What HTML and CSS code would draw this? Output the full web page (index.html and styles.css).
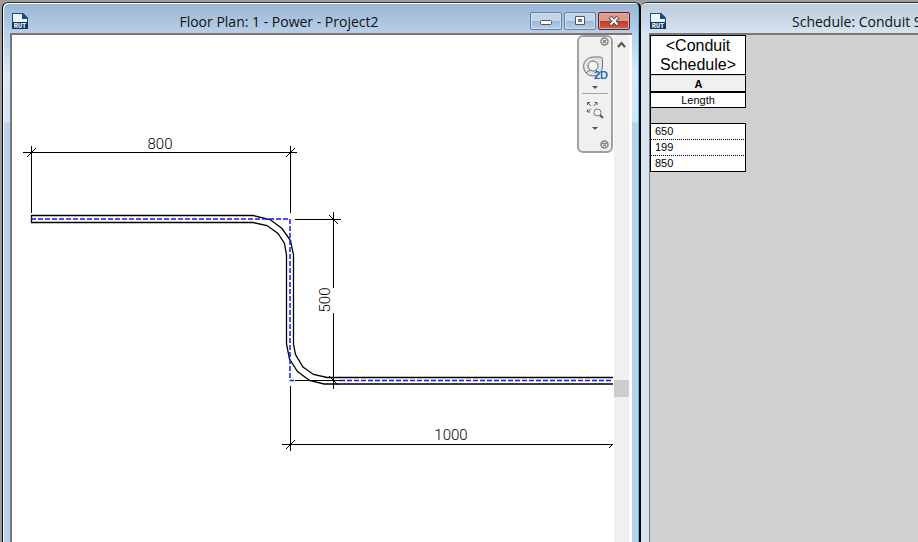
FILE: index.html
```
<!DOCTYPE html>
<html lang="en">
<head>
    <meta charset="utf-8">
    <meta name="viewport" content="width=device-width, initial-scale=1.0">
    <title>Project2</title>
    <link rel="stylesheet" href="styles.css">
</head>
<body>

<main class="workspace">
    <section class="window active">
        <header class="titlebar">
            <svg class="app-icon" width="16" height="16" aria-hidden="true">
                <path d="M0 0h11l5 5v11H0z" fill="#1b4f8c"/>
                <path d="M1 1h9v5h5v3H1z" fill="#f1f6fb"/>
                <path d="M11 0l5 5h-5z" fill="#0c4a8e"/>
                <path d="M0 9h16v7H0z" fill="#0b3468"/>
                <text x="8" y="15" class="rvt-text">RUT</text>
            </svg>
            <h1 class="title">Floor Plan: 1 - Power - Project2</h1>
            <div class="controls">
                <button type="button" class="control" aria-label="Minimize">
                    <svg width="12" height="10"><rect x="0.500" y="4.500" width="11" height="4" rx="1" fill="#fff" stroke="#535666"/></svg>
                </button>
                <button type="button" class="control" aria-label="Maximize">
                    <svg width="12" height="10"><path d="M1.500 0.500h9v8h-9z" fill="#fff" stroke="#535666"/><path d="M4.500 3.500h3v2h-3z" fill="#8fb0d0" stroke="#535666"/></svg>
                </button>
                <button type="button" class="control close" aria-label="Close">
                    <svg width="12" height="10"><path d="M2 1l8 8M10 1L2 9" stroke="#5a4550" stroke-width="4"/><path d="M2.500 1.500l7 7M9.500 1.500l-7 7" stroke="#fff" stroke-width="2"/></svg>
                </button>
            </div>
        </header>
        <div class="client">
            <div class="canvas">
                <svg class="drawing" width="602" height="507" viewBox="12 35 602 507">
                    <!-- conduit -->
                    <g class="conduit">
                        <path d="M253 215.500H31.500V222.500H253"/>
                        <path d="M253 215.500L270 219.500L282 228.500L290.500 240.500L293.500 255V344L295.500 354.500L303 367L313.500 374.500L327 377.500H613"/>
                        <path d="M253 222.500L267 225.500L278 233.500L284.500 243.500L286.500 255V344L289.500 359L297.500 371.500L309.500 380.500L324 384H613"/>
                    </g>
                    <path class="center" d="M31 219H290"/>
                    <path class="center" d="M290 219V380.500"/>
                    <path class="center" d="M290 380.500H294M340 380.500H613"/>

                    <!-- dimensions -->
                    <g class="dim">
                        <path d="M23 152.500H297M31.500 146V213M290.500 146V213"/>
                        <path d="M27 157l9-9M286 157l9-9"/>
                        <path d="M295 219.500H341M295 380.500H341M333.500 212V288M333.500 313V389"/>
                        <path d="M329 215l9 9M329 376l9 9"/>
                        <path d="M282 444.500H613M290.500 386V451"/>
                        <path d="M286 449l9-9M609 448l4-4"/>
                    </g>
                    <text class="dim-text" x="160" y="149">800</text>
                    <text class="dim-text" x="451" y="440">1000</text>
                    <text class="dim-text" transform="translate(330 300) rotate(-90)">500</text>
                </svg>

                <nav class="navbar" aria-label="Navigation">
                    <button type="button" class="nav-btn small" aria-label="Close navigation bar">
                        <svg width="9" height="9"><circle cx="4.500" cy="4.500" r="3.500" class="ring"/><path d="M3 3l3 3M6 3L3 6" class="ring"/></svg>
                    </button>
                    <button type="button" class="nav-btn wheel" aria-label="Steering wheel 2D">
                        <svg width="26" height="26">
                            <path d="M11 2H18Q20.500 2 20.500 4.500V12A9.500 9.500 0 1 1 11 2z" fill="#e2e2ea" stroke="#6f6f79"/>
                            <circle cx="11" cy="11" r="5" fill="#f3f3f3" stroke="#6f6f79"/>
                            <path d="M4 18l4-3M14 15l2 2" stroke="#6f6f79"/>
                            <text x="12" y="24" class="two-d">2D</text>
                        </svg>
                    </button>
                    <button type="button" class="nav-btn arrow" aria-label="Wheel options"><svg width="6" height="3"><path d="M0 0h6L3 3z"/></svg></button>
                    <hr class="nav-line">
                    <button type="button" class="nav-btn zoom" aria-label="Zoom in region">
                        <svg width="18" height="18" fill="none" stroke="#55555c">
                            <path d="M1.500 4V1.500H4M8.500 1.500H11V4M1.500 8.500V11H4M2 2l3 3M10.500 2l-3 3M2 10.500l3-3"/>
                            <circle cx="11.500" cy="11.500" r="3.500" fill="#f5f5f5" stroke="#528089"/>
                            <path d="M14 14l3 3" stroke-width="2"/>
                        </svg>
                    </button>
                    <button type="button" class="nav-btn arrow" aria-label="Zoom options"><svg width="6" height="3"><path d="M0 0h6L3 3z"/></svg></button>
                    <button type="button" class="nav-btn small last" aria-label="Customize">
                        <svg width="9" height="9"><circle cx="4.500" cy="4.500" r="3.500" class="ring"/><path d="M2 3.500h5M3 5.500h3" class="ring"/></svg>
                    </button>
                </nav>
            </div>
            <div class="scrollbar">
                <button type="button" class="scroll-up" aria-label="Scroll up">
                    <svg width="9" height="7"><path d="M1 6l3.500-4L8 6" fill="none" stroke="#505050" stroke-width="2"/></svg>
                </button>
                <div class="thumb"></div>
            </div>
        </div>
    </section>

    <section class="window schedule">
        <header class="titlebar">
            <svg class="app-icon" width="16" height="16" aria-hidden="true">
                <path d="M0 0h11l5 5v11H0z" fill="#1b4f8c"/>
                <path d="M1 1h9v5h5v3H1z" fill="#f1f6fb"/>
                <path d="M11 0l5 5h-5z" fill="#0c4a8e"/>
                <path d="M0 9h16v7H0z" fill="#0b3468"/>
                <text x="8" y="15" class="rvt-text">RUT</text>
            </svg>
            <h2 class="title">Schedule: Conduit Schedule</h2>
        </header>
        <div class="client">
            <table class="grid">
                <thead>
                    <tr class="name"><th>&lt;Conduit Schedule&gt;</th></tr>
                    <tr class="letter"><th>A</th></tr>
                    <tr class="field"><th>Length</th></tr>
                </thead>
                <tbody>
                    <tr class="spacer"><td></td></tr>
                    <tr><td>650</td></tr>
                    <tr><td>199</td></tr>
                    <tr><td>850</td></tr>
                </tbody>
            </table>
        </div>
    </section>
</main>

</body>
</html>
```

FILE: styles.css
```
* {
    box-sizing: border-box;
}

body {
    margin: 0;
    background-color: #9c9c9c;
    font-family: "Liberation Sans", Arial, sans-serif;
    overflow: hidden;
}

.workspace {
    display: grid;
    grid-template-columns: minmax(0, 1fr) 277px;
    height: 100vh;
    padding: 2px 0 0 2px;
}

/* windows */
.window {
    display: flex;
    flex-direction: column;
    min-width: 0;
    border-top: 1px solid #303030;
    border-radius: 6px 0 0 0;
    overflow: hidden;
}

.active {
    border-left: 1px solid #000;
    border-right: 2px solid #000;
    border-radius: 6px 6px 0 0;
    background: linear-gradient(#9ab5d3, #b9d1ea 32px, #dbe9f7 70px, #d3e4f5 119px, #b9d1ea 120px);
    box-shadow: inset 1px 1px #fff, inset -1px 0 #35c8ee;
    padding: 0 7px;
}

.schedule {
    background: linear-gradient(#bccbda, #d7e4f2 32px);
    box-shadow: inset 0 1px #eef4fa;
    padding-left: 8px;
}

.titlebar {
    display: flex;
    align-items: center;
    flex: none;
    height: 30px;
    padding-top: 6px;
}

.app-icon {
    flex: none;
    margin-left: 2px;
}

.schedule .app-icon {
    margin-left: 1px;
}

.rvt-text {
    font: bold 7px "Liberation Mono", monospace;
    fill: #fff;
    text-anchor: middle;
}

.title {
    flex: 1;
    margin: 0;
    padding-top: 2px;
    font: 14px/20px "Open Sans", "Segoe UI", sans-serif;
    color: #111;
    text-align: center;
    white-space: nowrap;
}

.schedule .title {
    padding-left: 126px;
    text-align: left;
}

.controls {
    display: flex;
    gap: 2px;
    margin-right: 2px;
}

.control {
    display: flex;
    align-items: center;
    justify-content: center;
    width: 32px;
    height: 18px;
    padding: 0;
    border: 1px solid #66809f;
    border-radius: 2px;
    background: linear-gradient(#c2d5e9 50%, #9db9d6 50%, #b5cee8);
    box-shadow: inset 0 0 0 1px #cfdff0;
}

.close {
    border-color: #582030;
    background: linear-gradient(#dc9a8d 50%, #bc3b27 50%, #d0614b);
    box-shadow: inset 0 0 0 1px #e3a79c;
}

.client {
    display: flex;
    flex: 1;
    min-height: 0;
    border: solid #777;
    border-width: 2px 0 0 2px;
    background-color: #fff;
}

.schedule .client {
    border-left-width: 1px;
    background-color: #d0d0d0;
}

/* plan view */
.canvas {
    position: relative;
    flex: 1;
    min-width: 0;
    overflow: hidden;
}

.drawing {
    display: block;
}

.conduit {
    fill: none;
    stroke: #000;
    stroke-width: 1.3;
}

.center {
    fill: none;
    stroke: #1414f0;
    stroke-width: 1.5;
    stroke-dasharray: 5 2;
}

.dim {
    stroke: #000;
}

.dim-text {
    font: 300 15px Roboto, "Liberation Sans", sans-serif;
    text-anchor: middle;
}

.navbar {
    position: absolute;
    top: 0;
    right: 1px;
    display: flex;
    flex-direction: column;
    align-items: center;
    width: 36px;
    height: 118px;
    border: 2px solid #a0a0a0;
    border-radius: 6px;
    background-color: #f0f0f0;
}

.nav-btn {
    display: block;
    padding: 0;
    border: 0;
    background: none;
    line-height: 0;
}

.nav-btn svg {
    display: block;
}

.small {
    align-self: flex-end;
    margin-right: 2px;
}

.ring {
    fill: none;
    stroke: #858585;
    stroke-width: 1.5;
}

.wheel {
    margin-top: 9px;
}

.two-d {
    font: bold 11px "Liberation Sans", Arial, sans-serif;
    fill: #2a68b0;
}

.arrow {
    margin-top: 5px;
    fill: #555;
}

.nav-line {
    width: 26px;
    margin: 4px 0 7px;
    border: 0;
    border-top: 1px solid #a5a5a5;
}

.zoom + .arrow {
    margin-top: 8px;
}

.last {
    margin-top: auto;
    margin-bottom: 2px;
}

.scrollbar {
    flex: none;
    width: 18px;
    background-color: #f0f0f0;
    border-right: 3px solid #fff;
}

.scroll-up {
    display: flex;
    align-items: center;
    justify-content: center;
    width: 15px;
    height: 18px;
    padding: 0;
    border: 0;
    background: none;
}

.thumb {
    height: 17px;
    margin-top: 327px;
    background-color: #cdcdcd;
}

/* schedule table */
.grid {
    align-self: flex-start;
    width: 96px;
    border-collapse: separate;
    border-spacing: 0;
    border-left: 1px solid #000;
    font-size: 11px;
    line-height: 15px;
}

.grid th,
.grid td {
    padding: 0;
    border-right: 1px solid #000;
    background-color: #fff;
}

.grid th {
    border-bottom: 1px solid #000;
    font-weight: normal;
}

.grid .name th {
    height: 40px;
    border-top: 1px solid #000;
    font-size: 16px;
    line-height: 19px;
}

.grid .letter th {
    height: 17px;
    padding-top: 1px;
    padding-left: 1px;
    border-top: 1px solid #d0d0d0;
    background-color: #f0f0f0;
    font-weight: bold;
    line-height: 14px;
}

.grid .field th {
    height: 16px;
    border-top: 1px solid #000;
    line-height: 14px;
}

.grid td {
    height: 16px;
    padding-left: 4px;
    border-bottom: 1px dotted #000;
}

.grid .spacer td {
    border-right: 0;
    border-bottom: 1px solid #000;
    background-color: #d0d0d0;
}

.grid tr:last-child td {
    border-bottom: 1px solid #000;
}
```
